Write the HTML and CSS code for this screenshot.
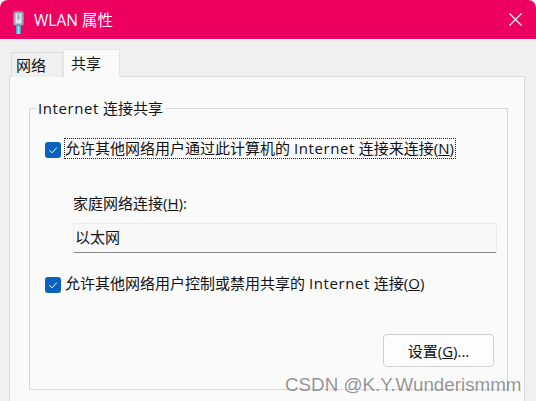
FILE: index.html
```html
<!DOCTYPE html>
<html lang="zh-CN">
<head>
<meta charset="utf-8">
<title>WLAN 属性</title>
<link rel="stylesheet" href="styles.css">
</head>
<body>
<div class="window">
  <header class="titlebar">
    <svg class="app-icon" width="14" height="24" viewBox="0 0 14 24">
      <rect x="2.5" y="0.5" width="10" height="14" rx="2" fill="#94a3b2" stroke="#7c8a98"/>
      <rect x="4.5" y="2.5" width="6" height="10" fill="#dfe6ec"/>
      <rect x="6.5" y="3.5" width="2" height="5" fill="#94a3b2"/>
      <rect x="5" y="15" width="5" height="8" fill="#3fa9d8"/>
      <rect x="6.5" y="15" width="2" height="8" fill="#a5dff5"/>
    </svg>
    <span class="title">WLAN 属性</span>
    <svg class="close" width="13" height="13" viewBox="0 0 13 13">
      <path d="M.5.5 12.5 12.5M12.5.5 .5 12.5" stroke="#fff" stroke-width="1.1" fill="none"/>
    </svg>
  </header>
  <div class="content">
    <nav class="tabs">
      <div class="tab">网络</div>
      <div class="tab tab-active">共享</div>
    </nav>
    <section class="panel">
      <fieldset class="group">
        <legend class="legend"><span class="latin">Internet</span> 连接共享</legend>
        <div class="row row-first">
          <span class="check"><svg width="12" height="12" viewBox="0 0 12 12"><path d="M2.5 6.3 5 8.8 9.8 3.6" fill="none" stroke="#fff" stroke-width="1"/></svg></span>
          <span class="label label-focus">允许其他网络用户通过此计算机的 <span class="latin">Internet</span> 连接来连接(<u>N</u>)</span>
        </div>
        <div class="field">
          <div class="field-label">家庭网络连接(<u>H</u>):</div>
          <div class="select">以太网</div>
        </div>
        <div class="row row-second">
          <span class="check"><svg width="12" height="12" viewBox="0 0 12 12"><path d="M2.5 6.3 5 8.8 9.8 3.6" fill="none" stroke="#fff" stroke-width="1"/></svg></span>
          <span class="label">允许其他网络用户控制或禁用共享的 <span class="latin">Internet</span> 连接(<u>O</u>)</span>
        </div>
        <div class="actions">
          <button class="button">设置(<u>G</u>)...</button>
        </div>
      </fieldset>
    </section>
  </div>
</div>
<div class="watermark">CSDN @K.Y.Wunderismmm</div>
</body>
</html>
```

FILE: styles.css
```css
* { box-sizing: border-box; }
html, body { margin: 0; padding: 0; }
body {
  position: relative;
  width: 536px;
  height: 401px;
  overflow: hidden;
  background: #f0f0f0;
  font-family: "Open Sans", "Noto Sans CJK SC", sans-serif;
  font-size: 15px;
  color: #111;
}
.window { display: flex; flex-direction: column; height: 401px; }
.titlebar {
  flex: none;
  display: flex;
  align-items: center;
  height: 39px;
  padding: 0 14px 0 11px;
  background: #ee0060;
  border-radius: 8px 8px 0 0;
  color: #fff;
}
.app-icon { flex: none; margin-top: 6px; }
.title { margin-left: 9px; font-size: 15.5px; line-height: 20px; }
.close { margin-left: auto; }
.latin { letter-spacing: 0.6px; }
.content { flex: 1; display: flex; flex-direction: column; padding: 11px 11px 0 9px; min-height: 0; }
.tabs { flex: none; display: flex; align-items: flex-end; height: 27px; padding-left: 2px; position: relative; z-index: 1; margin-bottom: -1px; }
.tab {
  width: 52px;
  height: 25px;
  padding-left: 4px;
  border: 1px solid #dcdcdc;
  border-bottom: none;
  background: #f0f0f0;
  line-height: 24px;
}
.tab-active {
  width: 57px;
  height: 28px;
  padding-left: 7px;
  background: #fafafa;
  border-color: #e6e6e6;
  line-height: 26px;
}
.panel {
  flex: 1;
  min-height: 0;
  padding: 21px 17px 0 19px;
  background: #fafafa;
  border: 1px solid #dcdcdc;
  border-bottom: none;
}
.group {
  margin: 0;
  height: 292px;
  width: 479px;
  padding: 0 0 0 15px;
  border: 1px solid #d9d9d9;
  min-width: 0;
}
.legend { margin-left: -8px; padding: 0 3px 0 1px; line-height: 20px; font-size: 15px; }
.row { display: flex; align-items: flex-end; }
.row-first { margin-top: 21px; }
.row-second { margin-top: 21px; }
.check {
  flex: none;
  width: 16px;
  height: 16px;
  border-radius: 3px;
  background: #0a62bc;
  display: flex;
  align-items: center;
  justify-content: center;
  margin-right: 4px;
}
.label { height: 19px; line-height: 19px; white-space: nowrap; }
.label-focus { outline: 1px dotted #222; outline-offset: 0; padding: 0 1px 0 0; }
.field { margin: 35px 0 0 28px; }
.field-label { line-height: 20px; }
.select {
  margin-top: 10px;
  width: 424px;
  height: 30px;
  padding-left: 1px;
  line-height: 27px;
  background: #f8f8f8;
  border: 1px solid #ececec;
  border-bottom: 1px solid #868686;
  border-radius: 2px;
}
.actions { display: flex; justify-content: flex-end; margin-top: 41px; padding-right: 13px; }
.button {
  width: 111px;
  height: 33px;
  padding: 0;
  font: inherit;
  color: #111;
  background: #fdfdfd;
  border: 1px solid #d0d0d0;
  border-radius: 4px;
}
.watermark {
  position: absolute;
  left: 285px;
  top: 375px;
  font-family: "Liberation Sans", sans-serif;
  font-size: 18.8px;
  line-height: 20px;
  color: rgba(90, 90, 90, 0.65);
  white-space: nowrap;
}
```
